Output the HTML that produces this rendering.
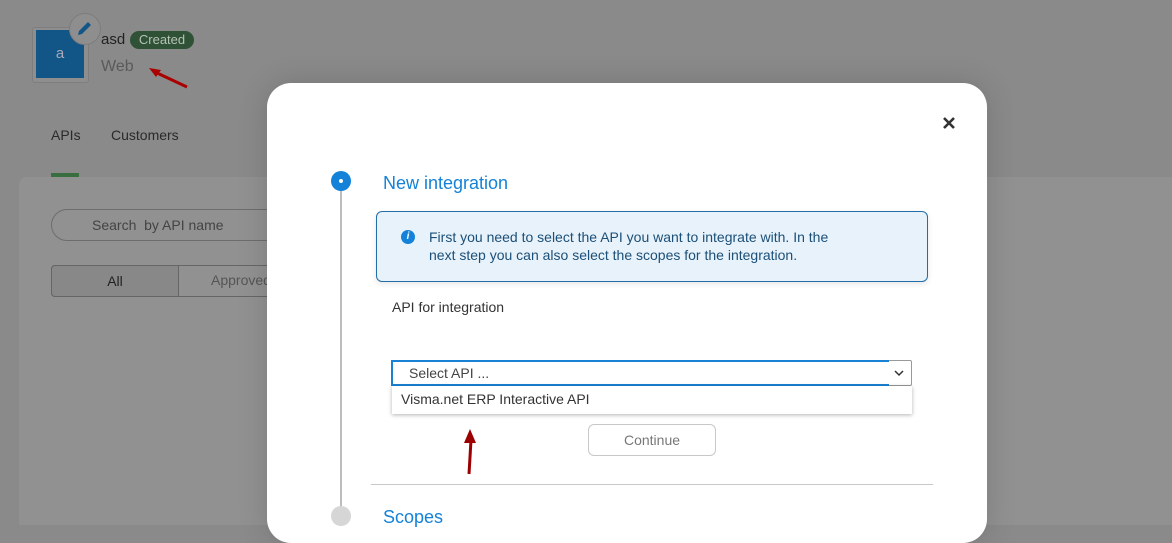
<!DOCTYPE html>
<html><head><meta charset="utf-8"><style>
*{box-sizing:border-box;margin:0;padding:0}
body{width:1172px;height:525px;overflow:hidden;background:#8a8a8a;font-family:"Liberation Sans",sans-serif;position:relative}
.a{position:absolute}
</style></head><body>
<div class="a" style="left:19px;top:177px;width:1153px;height:348px;background:#919191;border-radius:8px 0 0 0"></div>
<div class="a" style="left:32px;top:27px;width:57px;height:56px;border:1px solid #7e7e7e;border-radius:3px;background:#8e8e8e"></div>
<div class="a" style="left:36px;top:30px;width:48px;height:48px;background:#125687;color:#aab;font-size:15px;text-align:center;line-height:48px">a</div>
<div class="a" style="left:69px;top:13px;width:32px;height:32px;border-radius:50%;background:#8e8e8e;border:1px solid #7d7d7d"></div>
<svg class="a" style="left:75px;top:18px" width="20" height="20" viewBox="0 0 20 20"><path d="M3 17l1-4L13 4l3 3-9 9z" fill="#125687"/></svg>
<div class="a" style="left:101px;top:31px;font-size:15px;color:#222">asd</div>
<div class="a" style="left:130px;top:31px;width:64px;height:18px;border-radius:9px;background:#2f5136;color:#b5c2b5;font-size:13px;text-align:center;line-height:18px">Created</div>
<div class="a" style="left:101px;top:58px;font-size:16px;color:#5a5a5a">Web</div>
<svg class="a" style="left:145px;top:62px" width="45" height="30"><path d="M42 25L10 10" stroke="#a00" stroke-width="3"/><path d="M4 6l12 2-5 7z" fill="#a00"/></svg>
<div class="a" style="left:51px;top:127px;font-size:14px;color:#2a2a2a">APIs</div>
<div class="a" style="left:111px;top:127px;font-size:14px;color:#2a2a2a">Customers</div>
<div class="a" style="left:51px;top:173px;width:28px;height:4px;background:#386e40"></div>
<div class="a" style="left:51px;top:209px;width:240px;height:32px;border:1px solid #6d6d6d;border-radius:16px;padding:7px 40px;font-size:14px;color:#444">Search&nbsp; by API name</div>
<div class="a" style="left:51px;top:265px;width:240px;height:32px;border:1px solid #666;border-radius:4px"></div>
<div class="a" style="left:51px;top:265px;width:128px;height:32px;border:1px solid #666;border-radius:4px 0 0 4px;background:#888;font-size:14px;color:#222;text-align:center;line-height:30px">All</div>
<div class="a" style="left:211px;top:272px;font-size:14px;color:#555">Approved</div>

<div class="a" style="left:267px;top:83px;width:720px;height:460px;background:#fff;border-radius:24px;box-shadow:0 0 30px rgba(0,0,0,.15)"></div>
<svg class="a" style="left:942px;top:116px" width="14" height="14"><path d="M2 2l10 10M12 2L2 12" stroke="#333" stroke-width="2.6"/></svg>
<div class="a" style="left:340px;top:181px;width:2px;height:340px;background:#bdbdbd"></div>
<div class="a" style="left:331px;top:171px;width:20px;height:20px;border-radius:50%;background:#1482d8"></div>
<div class="a" style="left:339px;top:179px;width:4px;height:4px;border-radius:50%;background:#fff"></div>
<div class="a" style="left:331px;top:506px;width:20px;height:20px;border-radius:50%;background:#d6d6d6"></div>
<div class="a" style="left:383px;top:173px;font-size:18px;color:#1482d8">New integration</div>
<div class="a" style="left:383px;top:507px;font-size:18px;color:#1482d8">Scopes</div>
<div class="a" style="left:376px;top:211px;width:552px;height:71px;background:#e8f2fa;border:1px solid #236ea8;border-radius:6px;box-shadow:0 2px 6px rgba(0,0,0,.1)"></div>
<div class="a" style="left:401px;top:230px;width:14px;height:14px;border-radius:50%;background:#1482d8;color:#fff;font-size:10px;font-weight:bold;font-style:italic;text-align:center;line-height:14px">i</div>
<div class="a" style="left:429px;top:228px;width:425px;font-size:14px;line-height:18px;color:#1b4f78">First you need to select the API you want to integrate with. In the next step you can also select the scopes for the integration.</div>
<div class="a" style="left:392px;top:299px;font-size:14px;color:#333">API for integration</div>
<div class="a" style="left:391px;top:360px;width:521px;height:26px;border:1px solid #999;border-radius:2px"></div>
<div class="a" style="left:391px;top:360px;width:498px;height:26px;border:2px solid #1a82d4;border-right:none;padding:3px 16px;font-size:14px;color:#444">Select API ...</div>
<svg class="a" style="left:894px;top:369px" width="10" height="8"><path d="M1 2l4 4 4-4" stroke="#333" stroke-width="1.5" fill="none"/></svg>
<div class="a" style="left:392px;top:386px;width:520px;height:28px;background:#fff;box-shadow:0 1px 4px rgba(0,0,0,.3);padding:5px 9px;font-size:14px;color:#333">Visma.net ERP Interactive API</div>
<svg class="a" style="left:458px;top:426px" width="24" height="52"><path d="M11 48L13 14" stroke="#9c0000" stroke-width="3"/><path d="M12 3l6 14H6z" fill="#9c0000"/></svg>
<div class="a" style="left:588px;top:424px;width:128px;height:32px;border:1px solid #c8c8c8;border-radius:6px;text-align:center;line-height:30px;font-size:14px;color:#777">Continue</div>
<div class="a" style="left:371px;top:484px;width:562px;height:1px;background:#c8c8c8"></div>
</body></html>
